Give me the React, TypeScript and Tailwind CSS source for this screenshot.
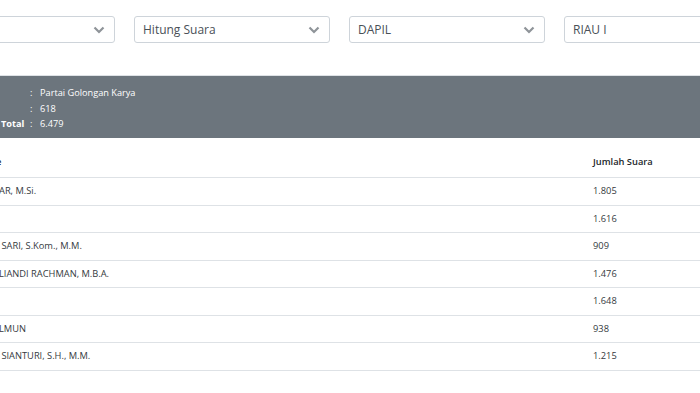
import React from "react";

const rows = [
  { name: "AR, M.Si.", suara: "1.805" },
  { name: "", suara: "1.616" },
  { name: " SARI, S.Kom., M.M.", suara: "909" },
  { name: "LIANDI RACHMAN, M.B.A.", suara: "1.476" },
  { name: "", suara: "1.648" },
  { name: "LMUN", suara: "938" },
  { name: " SIANTURI, S.H., M.M.", suara: "1.215" },
];

const Chevron = () => (
  <svg width="12" height="8" viewBox="0 0 12 8" className="text-[#8f9499]">
    <path d="M1.5 1.5 L6 6 L10.5 1.5" fill="none" stroke="currentColor" strokeWidth="2.2" />
  </svg>
);

const Select = ({ label, arrow = true }: { label: string; arrow?: boolean }) => (
  <div className="flex h-[27px] w-[196px] shrink-0 items-center justify-between rounded-[3px] border border-[#ced4da] bg-white pl-[8px] pr-[9px] text-[12px] text-[#495057]">
    <span>{label}</span>
    {arrow && <Chevron />}
  </div>
);

export default function App() {
  return (
    <div className="h-[393px] w-[700px] overflow-hidden bg-white font-['Open_Sans',sans-serif]">
      <div className="flex h-[75px] gap-[19px] pt-[16px] ml-[-81px]">
        <Select label="" />
        <Select label="Hitung Suara" />
        <Select label="DAPIL" />
        <Select label="RIAU I" arrow={false} />
      </div>

      <div className="h-[63px] border-t border-[#dee2e6] bg-[#6c757d] pt-[9px] text-[9.2px] leading-[15.5px] text-white">
        <div className="flex">
          <span className="w-[30px]"></span>
          <span className="w-[10px]">:</span>
          <span>Partai Golongan Karya</span>
        </div>
        <div className="flex">
          <span className="w-[30px]"></span>
          <span className="w-[10px]">:</span>
          <span>618</span>
        </div>
        <div className="flex">
          <span className="w-[30px] pl-[1px] font-bold">Total</span>
          <span className="w-[10px]">:</span>
          <span>6.479</span>
        </div>
      </div>

      <div className="text-[9.3px] text-[#343a40]">
        <div className="flex h-[40px] items-end border-b border-[#dee2e6] pb-[8px] font-semibold text-[#212529]">
          <div className="w-[593px]">
            <span className="ml-[-4px]">e</span>
          </div>
          <div>Jumlah Suara</div>
        </div>
        {rows.map((r, i) => (
          <div key={i} className="flex h-[27.5px] items-center border-b border-[#dee2e6]">
            <div className="w-[593px] whitespace-pre">
              <span className="ml-[-1px]">{r.name}</span>
            </div>
            <div>{r.suara}</div>
          </div>
        ))}
      </div>
    </div>
  );
}
